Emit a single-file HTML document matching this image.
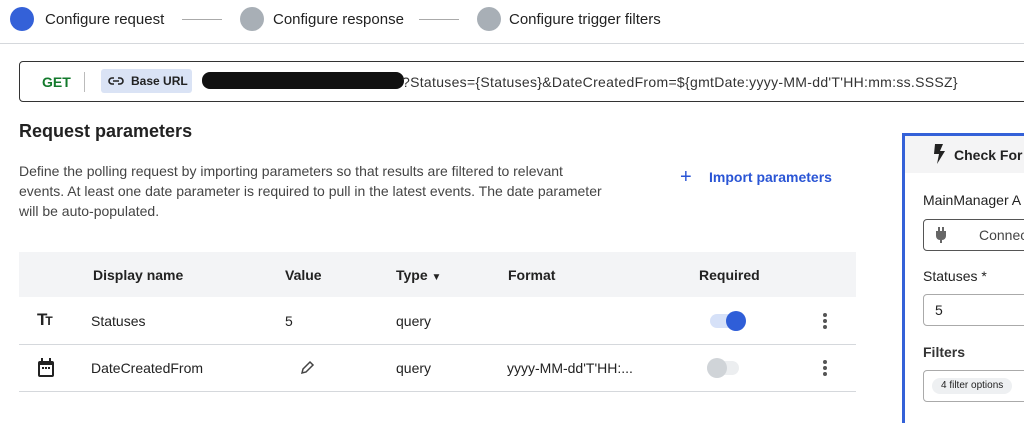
<!DOCTYPE html>
<html><head><style>
*{box-sizing:border-box;margin:0;padding:0}
body{width:1024px;height:415px;overflow:hidden;background:#fff;font-family:"Liberation Sans",sans-serif;color:#222;position:relative;font-size:14px}
.a{position:absolute;white-space:nowrap}
.dot{position:absolute;width:24px;height:24px;border-radius:50%;top:7px}
.ln{position:absolute;height:1px;background:#aaa;top:19px;width:40px}
.th{font-weight:bold;font-size:14px;color:#222}
.tog{position:absolute;width:32px;height:14px;border-radius:7px}
.knob{position:absolute;width:20px;height:20px;border-radius:50%;top:-3px}
.keb{position:absolute;width:4px;height:4px;border-radius:50%;background:#555}
</style></head><body>
<div class="dot" style="left:10px;background:#3461d8"></div>
<div class="a" style="left:45px;top:11px;font-size:15px">Configure request</div>
<div class="ln" style="left:182px"></div>
<div class="dot" style="left:240px;background:#a8afb6"></div>
<div class="a" style="left:273px;top:11px;font-size:15px">Configure response</div>
<div class="ln" style="left:419px"></div>
<div class="dot" style="left:477px;background:#a8afb6"></div>
<div class="a" style="left:509px;top:11px;font-size:15px">Configure trigger filters</div>
<div class="a" style="left:0;top:43px;width:1024px;height:1px;background:#d5d8dc"></div>

<div class="a" style="left:19px;top:61px;width:1020px;height:41px;border:1px solid #333;border-radius:4px"></div>
<div class="a" style="left:42px;top:74px;color:#137a2c;font-weight:bold;font-size:14px">GET</div>
<div class="a" style="left:84px;top:72px;width:1px;height:20px;background:#bbb"></div>
<div class="a" style="left:101px;top:69px;width:91px;height:24px;background:#dae3f5;border-radius:3px"></div>
<svg class="a" style="left:108px;top:75px" width="16" height="12" viewBox="0 0 16 12"><path d="M6 3H4a3 3 0 0 0 0 6h2M10 3h2a3 3 0 0 1 0 6h-2M5 6h6" stroke="#222" stroke-width="1.6" fill="none"/></svg>
<div class="a" style="left:131px;top:74px;font-weight:bold;font-size:12px">Base URL</div>
<div class="a" style="left:202px;top:72px;width:202px;height:17px;background:#111;border-radius:8px"></div>
<div class="a" style="left:402px;top:74px;font-size:14px;color:#333;letter-spacing:0.3px">?Statuses={Statuses}&amp;DateCreatedFrom=${gmtDate:yyyy-MM-dd'T'HH:mm:ss.SSSZ}</div>

<div class="a" style="left:19px;top:121px;font-size:18px;font-weight:bold">Request parameters</div>
<div class="a" style="left:19px;top:161px;font-size:14px;color:#444;line-height:20px">Define the polling request by importing parameters so that results are filtered to relevant<br>events. At least one date parameter is required to pull in the latest events. The date parameter<br>will be auto-populated.</div>
<div class="a" style="left:680px;top:166px;color:#2a55d5;font-size:20px">+</div>
<div class="a" style="left:709px;top:169px;color:#2a55d5;font-weight:bold;font-size:14px">Import parameters</div>

<div class="a" style="left:19px;top:252px;width:837px;height:45px;background:#f3f4f6"></div>
<div class="a th" style="left:93px;top:267px">Display name</div>
<div class="a th" style="left:285px;top:267px">Value</div>
<div class="a th" style="left:396px;top:267px">Type <span style="font-size:10px">▼</span></div>
<div class="a th" style="left:508px;top:267px">Format</div>
<div class="a th" style="left:699px;top:267px">Required</div>
<div class="a" style="left:19px;top:344px;width:837px;height:1px;background:#d5d8dc"></div>
<div class="a" style="left:19px;top:391px;width:837px;height:1px;background:#d5d8dc"></div>

<div class="a" style="left:37px;top:310px;font-weight:bold;font-size:17px;letter-spacing:-2px">T<span style="font-size:12px">T</span></div>
<div class="a" style="left:91px;top:313px">Statuses</div>
<div class="a" style="left:285px;top:313px">5</div>
<div class="a" style="left:396px;top:313px">query</div>
<div class="tog" style="left:710px;top:314px;background:#d6e1f8"><div class="knob" style="left:16px;background:#2f5ed8"></div></div>
<div class="keb" style="left:823px;top:313px"></div><div class="keb" style="left:823px;top:319px"></div><div class="keb" style="left:823px;top:325px"></div>

<svg class="a" style="left:37px;top:358px" width="18" height="20" viewBox="0 0 18 20"><rect x="1" y="3" width="16" height="16" rx="2" fill="#222"/><rect x="3" y="7" width="12" height="10" fill="#fff"/><rect x="4" y="0" width="2" height="4" fill="#222"/><rect x="12" y="0" width="2" height="4" fill="#222"/><rect x="5" y="9" width="2" height="2" fill="#222"/><rect x="8" y="9" width="2" height="2" fill="#222"/><rect x="11" y="9" width="2" height="2" fill="#222"/></svg>
<div class="a" style="left:91px;top:360px">DateCreatedFrom</div>
<svg class="a" style="left:300px;top:360px" width="15" height="15" viewBox="0 0 15 15"><path d="M2 13l1-4 7-7 3 3-7 7z" fill="none" stroke="#444" stroke-width="1.5"/></svg>
<div class="a" style="left:396px;top:360px">query</div>
<div class="a" style="left:507px;top:360px">yyyy-MM-dd'T'HH:...</div>
<div class="tog" style="left:707px;top:361px;background:#eceef0"><div class="knob" style="left:0;background:#d0d4d8"></div></div>
<div class="keb" style="left:823px;top:360px"></div><div class="keb" style="left:823px;top:366px"></div><div class="keb" style="left:823px;top:372px"></div>

<div class="a" style="left:902px;top:133px;width:130px;height:290px;border-left:3px solid #3461d8;border-top:3px solid #3461d8"></div>
<div class="a" style="left:905px;top:136px;width:130px;height:37px;background:#f4f4f5"></div>
<svg class="a" style="left:932px;top:144px" width="14" height="20" viewBox="0 0 14 20"><path d="M3 0h8l-3 7h5L5 20l2-10H2z" fill="#222"/></svg>
<div class="a" style="left:954px;top:147px;font-weight:bold;font-size:14px">Check For</div>
<div class="a" style="left:923px;top:192px;font-size:14px">MainManager A</div>
<div class="a" style="left:923px;top:219px;width:120px;height:32px;border:1px solid #555;border-radius:4px"></div>
<svg class="a" style="left:935px;top:227px" width="12" height="16" viewBox="0 0 12 16"><rect x="3" y="0" width="2" height="4" fill="#666"/><rect x="7" y="0" width="2" height="4" fill="#666"/><path d="M1 4h10v5a4 4 0 0 1-4 4v3H5v-3a4 4 0 0 1-4-4z" fill="#666"/></svg>
<div class="a" style="left:979px;top:227px;font-size:14px;color:#444">Connec</div>
<div class="a" style="left:923px;top:268px;font-size:14px">Statuses *</div>
<div class="a" style="left:923px;top:294px;width:120px;height:32px;border:1px solid #aaa;border-radius:4px"></div>
<div class="a" style="left:935px;top:302px;font-size:14px">5</div>
<div class="a" style="left:923px;top:344px;font-size:14px;font-weight:bold;color:#333">Filters</div>
<div class="a" style="left:923px;top:370px;width:120px;height:32px;border:1px solid #aaa;border-radius:4px"></div>
<div class="a" style="left:932px;top:378px;height:16px;padding:0 9px;background:#eef0f2;border-radius:8px;font-size:10px;line-height:16px;color:#222">4 filter options</div>
</body></html>
